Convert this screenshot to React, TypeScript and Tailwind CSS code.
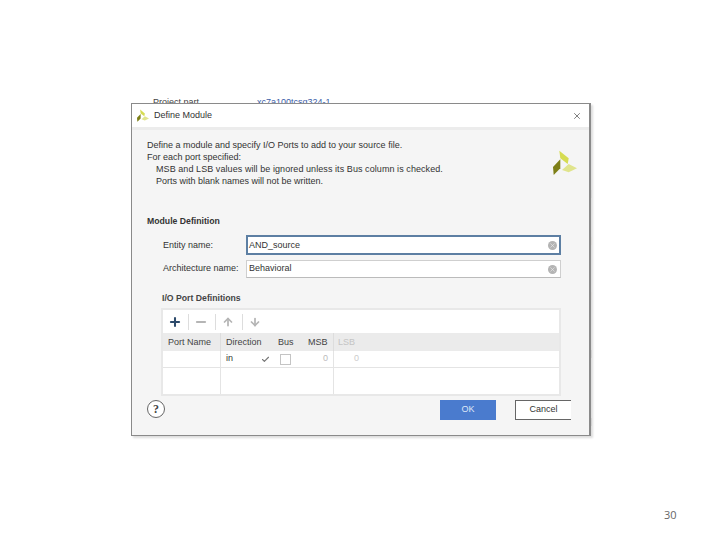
import { ArrowDown, ArrowUp, Check, Minus, Plus, X } from 'lucide-react';

const Logo = ({ className }: { className: string }) => (
  <svg viewBox="0 0 24 25" className={className}>
    <polygon points="6.3,0.7 15.7,8.3 14.7,14 7.3,8.3" fill="#d6dc52" />
    <polygon points="9,20 15.7,14 24,18.3 15.7,22.3" fill="#e0e48c" />
    <polygon points="0,17 7.3,9.3 7.3,18.3 0.7,25" fill="#7d7f17" />
  </svg>
);

const ClearIcon = () => (
  <span className="w-[9px] h-[9px] rounded-full bg-[#b4b4b4] flex items-center justify-center">
    <X size={7} strokeWidth={2} className="text-[#f0f0f0]" />
  </span>
);

const App = () => {
  return (
    <div className="relative w-[720px] h-[540px] bg-white overflow-hidden font-['Liberation_Sans',sans-serif] text-[9px] text-[#333]">
      {/* bits of the window behind the dialog */}
      <div className="absolute left-[153px] top-[96px] text-[9px] text-[#444]">Project part</div>
      <div className="absolute left-[257px] top-[96px] text-[9px] text-[#3b5ea8]">xc7a100tcsg324-1</div>
      <div className="absolute left-[590px] top-[190px] w-[2px] h-[8px] bg-[#999]" />
      <div className="absolute left-[590px] top-[237px] w-[2px] h-[8px] bg-[#d8c0a8]" />
      <div className="absolute left-[590px] top-[292px] w-[2px] h-[8px] bg-[#d8c0a8]" />
      <div className="absolute left-[590px] top-[350px] w-[2px] h-[8px] bg-[#555]" />
      <div className="absolute left-[590px] top-[418px] w-[2px] h-[8px] bg-[#555]" />

      <div className="relative z-10 pt-[103px] pl-[131px]">
        <div className="w-[460px] h-[333px] border border-[#8a8a8a] border-r-2 bg-[#f5f5f5] shadow-[2px_2px_2px_#ddd] flex flex-col">
          <div className="h-[23px] bg-white flex items-center px-[5px] border-b-[3px] border-[#ececec] box-content">
            <Logo className="w-[12px] h-[13px]" />
            <span className="ml-[5px] text-[9px] text-[#333]">Define Module</span>
            <X size={10} strokeWidth={1.5} className="ml-auto mr-[2px] text-[#333]" />
          </div>

          <div className="flex-1 pl-[15px] pr-[28px] pt-[9px] flex flex-col relative">
            <div className="leading-[12px] text-[#333]">
              <p>Define a module and specify I/O Ports to add to your source file.</p>
              <p>For each port specified:</p>
              <p className="pl-[9px] tracking-[0.07px]">MSB and LSB values will be ignored unless its Bus column is checked.</p>
              <p className="pl-[9px]">Ports with blank names will not be written.</p>
            </div>
            <Logo className="absolute right-[12px] top-[20px] w-[24px] h-[25px]" />

            <div className="mt-[28px] font-bold text-[8.7px] leading-[12px] text-[#333]">Module Definition</div>

            <div className="mt-[8px] ml-[16px] flex items-center h-[20px]">
              <span className="w-[83px] whitespace-nowrap pt-[1px]">Entity name:</span>
              <div className="w-[315px] h-[20px] bg-white border-2 border-[#5d7fa3] flex items-center pl-[1px] pr-[2px]">
                <span className="flex-1 pt-[1px]">AND_source</span>
                <ClearIcon />
              </div>
            </div>
            <div className="mt-[5px] ml-[16px] flex items-center h-[18px]">
              <span className="w-[83px] whitespace-nowrap">Architecture name:</span>
              <div className="w-[315px] h-[18px] bg-white border border-[#cfcfcf] border-b-[#bbb] flex items-center pl-[2px] pr-[3px]">
                <span className="flex-1">Behavioral</span>
                <ClearIcon />
              </div>
            </div>

            <div className="mt-[14px] ml-[15px] font-bold text-[8.7px] leading-[12px] text-[#444]">I/O Port Definitions</div>

            <div className="mt-[4px] ml-[14px] w-[400px] border-2 border-[#e8e8e8] bg-white">
              <div className="h-[23px] flex items-center pl-[5px]">
                <Plus size={14} strokeWidth={3.5} className="text-[#2d4a6b]" />
                <div className="w-px h-[16px] bg-[#ddd] ml-[6px] mr-[5px]" />
                <Minus size={14} strokeWidth={3.5} className="text-[#b5b5b5]" />
                <div className="w-px h-[16px] bg-[#ddd] ml-[7px] mr-[6px]" />
                <ArrowUp size={12} strokeWidth={3.5} className="text-[#b5b5b5]" />
                <div className="w-px h-[16px] bg-[#ddd] ml-[8px] mr-[6px]" />
                <ArrowDown size={12} strokeWidth={3.5} className="text-[#b5b5b5]" />
              </div>
              <div className="grid grid-cols-[58px_113px_1fr] text-[9px]">
                <div className="h-[18px] bg-[#ebebeb] pl-[5px] pt-[1px] flex items-center border-r border-[#ddd] text-[#444]">Port Name</div>
                <div className="h-[18px] bg-[#ebebeb] pt-[1px] flex items-center border-r border-[#ddd] text-[#444]">
                  <span className="w-[57px] pl-[5px]">Direction</span>
                  <span className="w-[30px]">Bus</span>
                  <span>MSB</span>
                </div>
                <div className="h-[18px] bg-[#ebebeb] pl-[4px] pt-[1px] flex items-center text-[#c4c4c4]">LSB</div>

                <div className="h-[17px] border-r border-b border-[#e4e4e4]" />
                <div className="h-[17px] border-r border-b border-[#e4e4e4] flex items-center">
                  <span className="w-[40px] pl-[5px]">in</span>
                  <Check size={9} strokeWidth={3} className="text-[#777]" />
                  <span className="ml-[10px] w-[11px] h-[11px] border border-[#c4c4c4]" />
                  <span className="ml-auto pr-[5px] text-[#bbb]">0</span>
                </div>
                <div className="h-[17px] border-b border-[#e4e4e4] pl-[20px] flex items-center text-[#ccc]">0</div>

                <div className="h-[26px] border-r border-[#e4e4e4]" />
                <div className="h-[26px] border-r border-[#e4e4e4]" />
                <div className="h-[26px]" />
              </div>
            </div>

            <div className="mt-[4px] flex items-start">
              <span className="w-[18px] h-[18px] rounded-full border border-[#666] bg-white flex items-center justify-center font-['Liberation_Serif',serif] font-bold text-[12px] text-[#444]">?</span>
              <button className="ml-auto w-[56px] h-[20px] bg-[#4a7bce] text-[#dfe8f7] text-[9px]">OK</button>
              <button className="ml-[19px] -mr-[10px] w-[56px] h-[20px] bg-white border border-[#666] border-r-0 text-[9px] text-[#333]">Cancel</button>
            </div>
          </div>
        </div>
      </div>

      <div className="absolute left-[664px] top-[507px] text-[11px] text-[#666] font-['Open_Sans',sans-serif]">30</div>
    </div>
  );
};

export default App;
